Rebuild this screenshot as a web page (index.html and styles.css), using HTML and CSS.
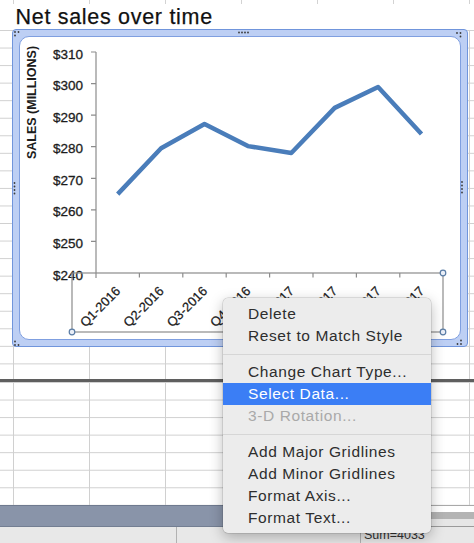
FILE: index.html
```html
<!DOCTYPE html>
<html lang="en">
<head>
<meta charset="utf-8">
<title>Net sales over time</title>
<link rel="stylesheet" href="styles.css">
</head>
<body>
<div class="screen">
  <div class="topstrip"></div>
  <h1 class="title">Net sales over time</h1>
  <div class="grid grid-upper"></div>
  <div class="split"></div>
  <div class="grid grid-lower"></div>
  <div class="bottombar">
    <div class="tabs"></div>
    <div class="hscroll"></div>
  </div>
  <div class="status">
    <div class="scell scell-a"></div>
    <div class="scell scell-b"></div>
    <div class="sum">Sum=4033</div>
  </div>

  <div class="chart">
    <div class="plot">
      <svg width="440" height="302" viewBox="20 37 440 302" xmlns="http://www.w3.org/2000/svg">
        <text class="ytitle" x="35.5" y="102.5" transform="rotate(-90 35.5 102.5)">SALES (MILLIONS)</text>
        <g class="ylabels">
          <text x="83" y="58.5">$310</text>
          <text x="83" y="90.1">$300</text>
          <text x="83" y="121.6">$290</text>
          <text x="83" y="153.2">$280</text>
          <text x="83" y="184.8">$270</text>
          <text x="83" y="216.4">$260</text>
          <text x="83" y="247.9">$250</text>
          <text x="83" y="279.5">$240</text>
        </g>
        <g class="axis">
          <line x1="96" y1="52" x2="96" y2="278"/>
          <line x1="91" y1="52" x2="96" y2="52"/>
          <line x1="91" y1="83.6" x2="96" y2="83.6"/>
          <line x1="91" y1="115.1" x2="96" y2="115.1"/>
          <line x1="91" y1="146.7" x2="96" y2="146.7"/>
          <line x1="91" y1="178.3" x2="96" y2="178.3"/>
          <line x1="91" y1="209.9" x2="96" y2="209.9"/>
          <line x1="91" y1="241.4" x2="96" y2="241.4"/>
          <line x1="139.4" y1="273" x2="139.4" y2="277.5"/>
          <line x1="182.8" y1="273" x2="182.8" y2="277.5"/>
          <line x1="226.2" y1="273" x2="226.2" y2="277.5"/>
          <line x1="269.6" y1="273" x2="269.6" y2="277.5"/>
          <line x1="313" y1="273" x2="313" y2="277.5"/>
          <line x1="356.4" y1="273" x2="356.4" y2="277.5"/>
          <line x1="399.8" y1="273" x2="399.8" y2="277.5"/>
          <rect x="72" y="273" width="371" height="59"/>
        </g>
        <g class="xlabels">
          <text x="121.2" y="292" transform="rotate(-45 121.2 292)">Q1-2016</text>
          <text x="164.6" y="292" transform="rotate(-45 164.6 292)">Q2-2016</text>
          <text x="208" y="292" transform="rotate(-45 208 292)">Q3-2016</text>
          <text x="251.4" y="292" transform="rotate(-45 251.4 292)">Q4-2016</text>
          <text x="294.8" y="292" transform="rotate(-45 294.8 292)">Q1-2017</text>
          <text x="338.2" y="292" transform="rotate(-45 338.2 292)">Q2-2017</text>
          <text x="381.6" y="292" transform="rotate(-45 381.6 292)">Q3-2017</text>
          <text x="425" y="292" transform="rotate(-45 425 292)">Q4-2017</text>
        </g>
        <polyline class="series" points="117.7,194.1 161.1,148.3 204.5,124 247.9,146.1 291.3,153 334.7,107.9 378.1,87 421.5,134.1"/>
        <g class="handles">
          <circle cx="72" cy="332" r="2.8"/>
          <circle cx="443" cy="273" r="2.8"/>
          <circle cx="443" cy="332" r="2.8"/>
        </g>
      </svg>
    </div>
    <svg class="grips" width="456" height="318" viewBox="12 29 456 318" xmlns="http://www.w3.org/2000/svg">
      <g class="dots">
        <circle cx="15" cy="32" r="0.9"/><circle cx="18.5" cy="32" r="0.9"/><circle cx="15" cy="35.5" r="0.9"/>
        <circle cx="457" cy="33" r="0.9"/><circle cx="460.5" cy="33" r="0.9"/><circle cx="460.5" cy="36.5" r="0.9"/>
        <circle cx="239" cy="32.5" r="0.9"/><circle cx="242" cy="32.5" r="0.9"/><circle cx="245" cy="32.5" r="0.9"/><circle cx="248" cy="32.5" r="0.9"/>
        <circle cx="14.5" cy="183" r="0.9"/><circle cx="14.5" cy="186.5" r="0.9"/><circle cx="14.5" cy="190" r="0.9"/><circle cx="14.5" cy="193.5" r="0.9"/>
        <circle cx="462" cy="182" r="0.9"/><circle cx="462" cy="185.5" r="0.9"/><circle cx="462" cy="189" r="0.9"/><circle cx="462" cy="192.5" r="0.9"/>
        <circle cx="15" cy="341.5" r="0.9"/><circle cx="15" cy="345" r="0.9"/><circle cx="18.5" cy="345" r="0.9"/>
        <circle cx="461" cy="340.5" r="0.9"/><circle cx="457.5" cy="344" r="0.9"/><circle cx="461" cy="344" r="0.9"/>
      </g>
    </svg>
  </div>

  <div class="menu">
    <div class="item">Delete</div>
    <div class="item">Reset to Match Style</div>
    <div class="sep"></div>
    <div class="item">Change Chart Type...</div>
    <div class="item selected">Select Data...</div>
    <div class="item disabled">3-D Rotation...</div>
    <div class="sep"></div>
    <div class="item">Add Major Gridlines</div>
    <div class="item">Add Minor Gridlines</div>
    <div class="item">Format Axis...</div>
    <div class="item">Format Text...</div>
  </div>
</div>
</body>
</html>
```
FILE: styles.css
```css
* { box-sizing: border-box; }

body {
  margin: 0;
  background: #ffffff;
}

.screen {
  position: relative;
  width: 474px;
  height: 543px;
  overflow: hidden;
  background: #ffffff;
  font-family: "Liberation Sans", Arial, Helvetica, sans-serif;
}

.topstrip {
  height: 4px;
  background-image: linear-gradient(to right, #d3d3d3 1px, transparent 1px);
  background-size: 76px 4px;
  background-position: 13px 0;
}

.title {
  margin: 0;
  height: 26px;
  line-height: 26px;
  padding-left: 15.5px;
  font-size: 21.5px;
  font-weight: normal;
  letter-spacing: 0.7px;
  color: #111111;
  -webkit-text-stroke: 0.25px #111111;
}

.grid {
  background-image:
    linear-gradient(to right, #d0d0d0 1px, transparent 1px),
    linear-gradient(to bottom, #d0d0d0 1px, transparent 1px);
  background-size: 76px 100%, 100% 17.55px;
  background-position: 13px 0, 0 0;
}

.grid-upper { height: 349px; }

.split {
  height: 3px;
  background: #5f5f5f;
}

.grid-lower { height: 123px; }

.bottombar {
  display: flex;
  height: 22px;
}

.tabs {
  width: 330px;
  background: #8994a9;
  border-top: 1px solid #6f7a8f;
  border-bottom: 1px solid #737e92;
}

.hscroll {
  flex: 1;
  border-top: 1px solid #a9a9a9;
  border-bottom: 1px solid #9a9a9a;
  background: linear-gradient(to bottom, #ffffff 0 6px, #b4b4b4 6px 13px, #e6e6e6 13px);
}

.status {
  display: flex;
  height: 16px;
  background: #e8e8e8;
  font-size: 12.5px;
  color: #333333;
}

.scell {
  border-right: 1px solid #b2b2b2;
}

.scell-a { width: 177px; }
.scell-b { width: 184px; }

.sum {
  padding: 1px 0 0 3px;
  line-height: 14px;
}

/* Chart object */
.chart {
  position: absolute;
  left: 12px;
  top: 29px;
  width: 456px;
  height: 318px;
  padding: 6px;
  background: #bdcff4;
  border: 1px solid #7095dc;
  border-radius: 4px;
}

.plot {
  width: 100%;
  height: 100%;
  background: #ffffff;
  border: 1px solid #7f9fe0;
  border-radius: 10px;
  overflow: hidden;
}

.plot svg { display: block; }

.ytitle {
  font-family: "Liberation Sans", Arial, sans-serif;
  font-size: 12.5px;
  font-weight: bold;
  fill: #1c1c1c;
  text-anchor: middle;
}

.ylabels text {
  font-family: "Liberation Sans", Arial, sans-serif;
  font-size: 13.5px;
  fill: #1c1c1c;
  stroke: #1c1c1c;
  stroke-width: 0.3;
  text-anchor: end;
}

.xlabels text {
  font-family: "Liberation Sans", Arial, sans-serif;
  font-size: 13px;
  fill: #1c1c1c;
  stroke: #1c1c1c;
  stroke-width: 0.25;
  text-anchor: end;
}

.axis line,
.axis rect {
  stroke: #8c8c8c;
  stroke-width: 1.2;
  fill: none;
}

.series {
  fill: none;
  stroke: #4a7dba;
  stroke-width: 4.5;
  stroke-linejoin: round;
}

.handles circle {
  fill: #e9eef7;
  stroke: #5b7da6;
  stroke-width: 1.2;
}

.grips {
  position: absolute;
  left: -1px;
  top: -1px;
  pointer-events: none;
}

.dots circle { fill: #3a3a3a; }

/* Context menu */
.menu {
  position: absolute;
  left: 223px;
  top: 298px;
  width: 208px;
  padding: 5px 0 4px;
  background: #ececec;
  border-radius: 5px;
  box-shadow: 0 0 0 0.5px rgba(0, 0, 0, 0.18), 0 4px 14px rgba(0, 0, 0, 0.28);
  font-size: 15.5px;
  letter-spacing: 0.6px;
  color: #2e2e2e;
}

.item {
  height: 22px;
  line-height: 22px;
  padding-left: 25px;
  white-space: nowrap;
}

.item.selected {
  background: #3b7ef5;
  color: #ffffff;
}

.item.disabled { color: #a9a9a9; }

.sep {
  height: 1px;
  margin: 7px 0 6px;
  background: #d6d6d6;
}
```
